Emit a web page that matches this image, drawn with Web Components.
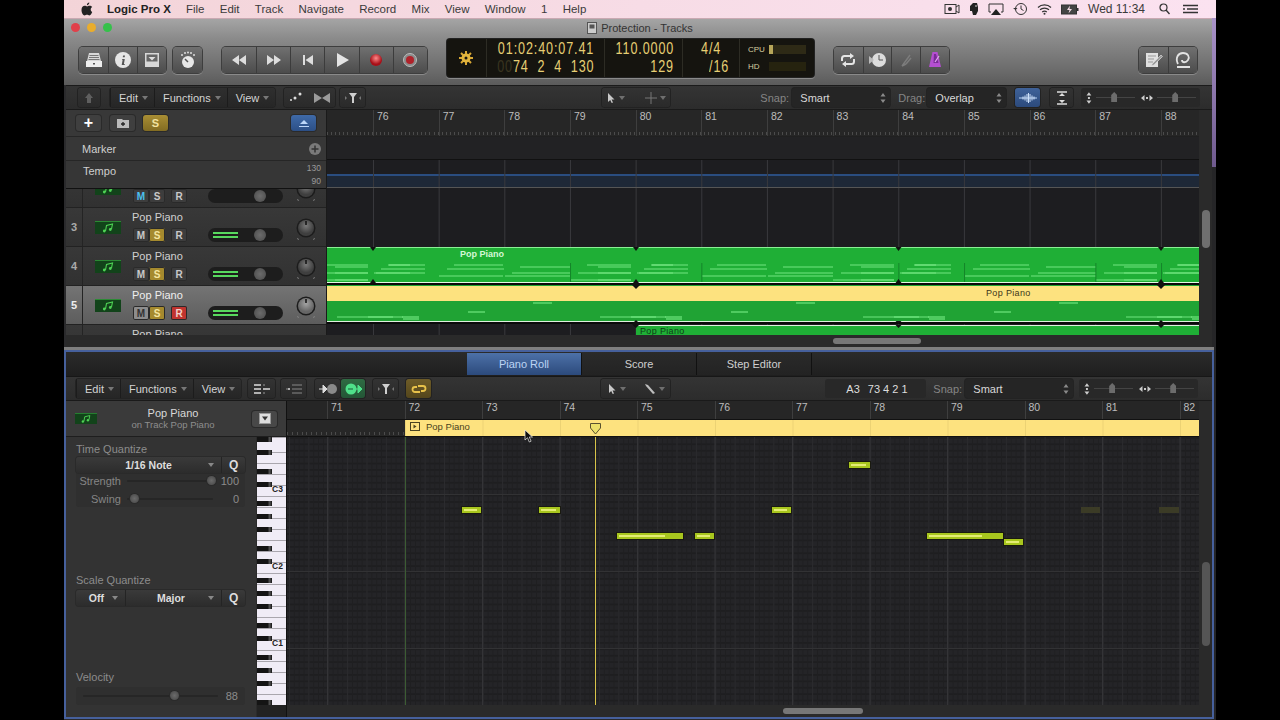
<!DOCTYPE html>
<html>
<head>
<meta charset="utf-8">
<title>Logic Pro X</title>
<style>
html,body{margin:0;padding:0;background:#000;width:1280px;height:720px;overflow:hidden;font-family:"Liberation Sans",Arial,sans-serif;}
</style>
</head>
<body>
<logic-app>
    <mac-menubar></mac-menubar>
    <window-toolbar></window-toolbar>
    <arrange-panel></arrange-panel>
    <piano-panel></piano-panel>
</logic-app>
<script>
// icons used by more than one component
const svg = (w, h, body) => `<svg width="${w}" height="${h}" viewBox="0 0 ${w} ${h}" style="display:block">${body}</svg>`;
const TRI = svg(6, 4, '<path d="M0 0h6L3 4z" fill="#6f6f6f"/>');
const ICON = {
    apple: svg(12, 14, '<path fill="#222" d="M8.3 0.6c.1 1.3-1 2.6-2.4 2.6C5.800 1.900 7 .7 8.300 .6zM11.200 10c-.5 1.200-1.500 3.400-2.800 3.400-1 0-1.300-.6-2.400-.6s-1.500.6-2.400.6C2.100 13.400.5 10.500.5 7.900.5 5.300 2.100 3.800 3.700 3.800c1 0 1.800.6 2.400.6s1.300-.7 2.600-.7c.9 0 1.900.5 2.500 1.300-2.100 1.200-1.800 4.100 0 5z"/>'),
    note: svg(26, 13, '<rect width="26" height="13" fill="#12431a"/><rect width="26" height="1" fill="#2b8a34"/><path d="M10.500 10L11.500 4.500l6-1.500-1 5" stroke="#4fd455" stroke-width="1.100" fill="none"/><circle cx="9.300" cy="10" r="1.400" fill="#4fd455"/><circle cx="15.300" cy="8.500" r="1.400" fill="#4fd455"/>'),
    pointer: svg(10, 12, '<path d="M2 1v9l2.200-2 1.500 3 1.300-.6-1.400-2.900H8.500z" fill="#c9c9c9"/>'),
    filter: svg(20, 12, '<path d="M6 1h8l-3 4v6H9V5z" fill="#cfcfcf"/><path d="M2 4l2 2-2 2zM18 4l-2 2 2 2z" fill="#777"/>'),
    updown: svg(6, 12, '<path d="M3 1l2.500 3.500h-5zM3 11L.5 7.500h5z" fill="#8a8a8a"/>')
};

class LogicApp extends HTMLElement {
    connectedCallback() {
        this.attachShadow({mode: 'open'}).innerHTML = `
            <style>
                :host {
                    display:flex;
                    flex-direction:column;
                    width:1152px;
                    height:720px;
                    margin-left:64px;
                    background:linear-gradient(90deg,#2a2a2c 0,#2a2a2c 1148px,#252527 1148px);
                    position:relative;
                }
                .strip {
                    position:absolute;
                    right:0;
                    top:18px;
                    width:4px;
                    height:149px;
                    background:linear-gradient(#a993c9,#6f5a8e);
                }
            </style>
            <slot></slot>
            <div class="strip"></div>
        `;
    }
}
customElements.define('logic-app', LogicApp);

class MacMenubar extends HTMLElement {
    connectedCallback() {
        const items = ['File','Edit','Track','Navigate','Record','Mix','View','Window','1','Help'];
        const status = [
            svg(16,12,'<rect x="1" y="1.500" width="11" height="9" fill="none" stroke="#333"/><circle cx="6" cy="6" r="2" fill="#333"/><path d="M12 4l3-2v8l-3-2" fill="none" stroke="#333"/>'),
            svg(10,14,'<path d="M1 4l3-3h4l1 4v4l-2 4H4L3 9H1z" fill="#222"/><circle cx="7" cy="4" r=".8" fill="#eee"/>'),
            svg(16,13,'<path d="M3 9H1V1h14v8h-2" fill="none" stroke="#333"/><path d="M8 6l5 6H3z" fill="#222"/>'),
            svg(15,14,'<circle cx="8" cy="7" r="5.500" fill="none" stroke="#333"/><path d="M8 3.500V7l2.500 1.500" fill="none" stroke="#333"/><path d="M0 6l2.500 2L4.500 6z" fill="#333"/>'),
            svg(15,12,'<path d="M1 4.500c3.500-3.500 9.500-3.500 13 0M3 6.800c2.500-2.300 6.500-2.300 9 0M5.200 9c1.300-1 3.300-1 4.600 0" fill="none" stroke="#333" stroke-width="1.200"/><circle cx="7.500" cy="10.800" r="1" fill="#333"/>'),
            svg(18,11,'<rect x=".5" y="1" width="15" height="9" fill="#444" stroke="#333"/><rect x="16" y="4" width="1.500" height="3" fill="#333"/><path d="M9 1.500L6 6h2.500L7.500 9.500 11 5H8.500z" fill="#f4dde6"/>')
        ];
        this.attachShadow({mode: 'open'}).innerHTML = `
            <style>
                :host {
                    display:flex;
                    align-items:center;
                    flex:none;
                    height:18px;
                    padding:0 0 0 17px;
                    background:linear-gradient(90deg,#f3d4d8,#f7dce6 50%,#fbe2f0);
                    font:11.5px "Liberation Sans",Arial,sans-serif;
                    color:#3a3a3a;
                    box-shadow:0 1px 0 #c9a9b2;
                    position:relative;
                }
                b { margin:0 15px 0 14px; color:#222; font-size:11.5px; }
                span { margin-right:15.3px; }
                .right { margin-left:auto; display:flex; align-items:center; padding-right:18px; }
                .right i { display:block; margin-right:9px; }
                .right em { font-style:normal; margin:0 14px 0 0; font-size:12px; }
            </style>
            ${ICON.apple}
            <b>Logic Pro X</b>
            ${items.map(i => `<span>${i}</span>`).join('')}
            <div class="right">
                ${status.map(s => `<i>${s}</i>`).join('')}
                <em>Wed 11:34</em>
                <i style="margin-right:13px">${svg(11,12,'<circle cx="4.500" cy="4.500" r="3.500" fill="none" stroke="#333" stroke-width="1.200"/><path d="M7 7l3.500 4" stroke="#333" stroke-width="1.300"/>')}</i>
                <i style="margin:0">${svg(15,10,'<path d="M0 1.500h15M4 5h11M0 8.500h15" stroke="#333" stroke-width="1.500"/><path d="M0 5h2" stroke="#333" stroke-width="1.500"/>')}</i>
            </div>
        `;
    }
}
customElements.define('mac-menubar', MacMenubar);

class ToolBtn extends HTMLElement {
    connectedCallback() {
        const w = this.getAttribute('w') || 29;
        this.attachShadow({mode: 'open'}).innerHTML = `
            <style>
                :host {
                    display:flex;
                    align-items:center;
                    justify-content:center;
                    width:${w}px;
                    height:26px;
                    background:linear-gradient(#707070,#4c4c4c);
                    border-left:1px solid #3c3c3c;
                    box-sizing:border-box;
                }
                :host(:first-child) { border-left:none; }
            </style>
            <slot></slot>
        `;
    }
}
customElements.define('tool-btn', ToolBtn);

class BtnGroup extends HTMLElement {
    connectedCallback() {
        this.attachShadow({mode: 'open'}).innerHTML = `
            <style>
                :host {
                    display:flex;
                    flex:none;
                    border-radius:4px;
                    overflow:hidden;
                    margin-top:3px;
                    box-shadow:0 0 0 1px #3e3e3e,0 1px 0 1px #8a8a8a;
                }
            </style>
            <slot></slot>
        `;
    }
}
customElements.define('btn-group', BtnGroup);

class LcdDisplay extends HTMLElement {
    connectedCallback() {
        this.attachShadow({mode: 'open'}).innerHTML = `
            <style>
                :host {
                    display:flex;
                    flex:none;
                    width:367px;
                    height:38px;
                    margin-left:20px;
                    background:#15140f;
                    border-radius:3px;
                    box-shadow:0 0 0 1px #222,0 1px 0 1px #8a8a8a;
                    color:#e7cf74;
                    font:17px "Liberation Sans",sans-serif;
                    overflow:hidden;
                }
                .cell {
                    display:flex;
                    flex-direction:column;
                    justify-content:center;
                    align-items:flex-end;
                    flex:none;
                    border-right:1px solid #2d2c24;
                    line-height:18px;
                    box-sizing:border-box;
                    padding-right:10px;
                    white-space:nowrap;
                }
                .cell div { transform:scaleX(.74); transform-origin:100% 50%; letter-spacing:1.2px; }
                .dim { color:#3a3520; }
                .meters { flex:1; padding:3px 8px 3px 8px; display:flex; flex-direction:column; justify-content:space-between; font:8px "Liberation Sans",sans-serif; color:#d8cfa0; }
                .meter { display:flex; align-items:center; height:15px; }
                .meter span { width:21px; }
                .meter i { display:block; flex:1; height:9px; background:linear-gradient(90deg,#b7a65a 4px,#2e2a16 4px); }
                .meter.hd i { background:#26230f; }
            </style>
            <div class="cell" style="width:40px;align-items:center;padding:0">
                ${svg(16,16,'<g stroke="#d9a834" stroke-width="2"><path d="M8 1v14M1 8h14M3 3l10 10M13 3L3 13"/></g><circle cx="8" cy="8" r="4.500" fill="#e2b53e"/><circle cx="8" cy="8" r="1.500" fill="#15140f"/>')}
            </div>
            <div class="cell" style="width:118px">
                <div>01:02:40:07.41</div>
                <div><span class="dim">00</span>74&nbsp; 2&nbsp; 4&nbsp; 130</div>
            </div>
            <div class="cell" style="width:78px;padding-right:8px">
                <div>110.0000</div>
                <div>129</div>
            </div>
            <div class="cell" style="width:57px">
                <div style="margin-right:8px">4/4</div>
                <div>/16</div>
            </div>
            <div class="meters">
                <div class="meter"><span>CPU</span><i></i></div>
                <div class="meter hd"><span>HD</span><i></i></div>
            </div>
        `;
    }
}
customElements.define('lcd-display', LcdDisplay);

class WindowToolbar extends HTMLElement {
    connectedCallback() {
        this.attachShadow({mode: 'open'}).innerHTML = `
            <style>
                :host {
                    display:block;
                    flex:none;
                    height:67px;
                    background:linear-gradient(#a6a6a6,#8b8b8b 30%,#6a6a6a 80%,#5b5b5b);
                    font:11px "Liberation Sans",Arial,sans-serif;
                }
                .title { position:relative; height:19px; display:flex; align-items:center; justify-content:center; color:#333; gap:4px; padding-right:0; }
                .lights { position:absolute; left:7px; top:5px; display:flex; gap:7px; }
                .lights i { display:block; width:9px; height:9px; border-radius:50%; }
                .row { display:flex; align-items:center; height:42px; padding-left:15px; }
                .m6 { margin-left:7px; }
                .m19 { margin-left:20px; }
                .m20 { margin-left:20px; }
                .end { margin-left:auto; margin-right:19px; }
            </style>
            <div class="title">
                <div class="lights"><i style="background:#e0404a"></i><i style="background:#e9ad2d"></i><i style="background:#35c24a"></i></div>
                ${svg(10,12,'<rect x=".5" y=".5" width="9" height="11" fill="#ccc" stroke="#555"/><rect x="2.500" y="2.500" width="5" height="4" fill="#555"/>')}
                <span>Protection - Tracks</span>
            </div>
            <div class="row">
                <btn-group>
                    <tool-btn>${svg(18,16,'<path d="M4 1h10l2 8H2z" fill="#d8d8d8"/><path d="M4.500 3.500h9M4 5.500h10M3.500 7.500h11" stroke="#777"/><rect x="1" y="9" width="16" height="6" fill="#eee"/><rect x="8" y="11" width="2" height="1.500" fill="#555"/>')}</tool-btn>
                    <tool-btn>${svg(16,16,'<circle cx="8" cy="8" r="8" fill="#e6e6e6"/><path d="M8 3.500h2L9.700 5.300H7.800zM7.500 7h2.300L8.900 12h1l-.3 1H6.700l.9-5H6.800z" fill="#555"/>')}</tool-btn>
                    <tool-btn>${svg(16,16,'<rect x="1" y="1" width="14" height="14" fill="#d8d8d8"/><rect x="2.500" y="2.500" width="11" height="7" fill="#666"/><path d="M4.500 5h7L8 8.500z" fill="#ddd"/>')}</tool-btn>
                </btn-group>
                <btn-group class="m6"><tool-btn>${svg(16,18,'<circle cx="8" cy="11" r="6" fill="#e8e8e8"/><path d="M8 11l-3-3" stroke="#555" stroke-width="1.500"/><circle cx="2" cy="4" r="1" fill="#ddd"/><circle cx="5" cy="2" r="1" fill="#ddd"/><circle cx="8" cy="1.500" r="1" fill="#ddd"/><circle cx="11" cy="2" r="1" fill="#ddd"/><circle cx="14" cy="4" r="1" fill="#ddd"/>')}</tool-btn></btn-group>
                <btn-group class="m19">
                    <tool-btn w="34.170">${svg(16,12,'<path d="M8 1v10L1 6zM15 1v10L8 6z" fill="#ddd"/>')}</tool-btn>
                    <tool-btn w="34.170">${svg(16,12,'<path d="M1 1v10l7-5zM8 1v10l7-5z" fill="#ddd"/>')}</tool-btn>
                    <tool-btn w="34.170">${svg(12,12,'<path d="M1 1h2v10H1zM11 1v10L3.500 6z" fill="#ddd"/>')}</tool-btn>
                    <tool-btn w="34.170">${svg(13,14,'<path d="M1 0v14l12-7z" fill="#e4e4e4"/>')}</tool-btn>
                    <tool-btn w="34.170">${svg(14,14,'<defs><radialGradient id="rec" cx=".5" cy=".35"><stop offset="0" stop-color="#ff8a8a"/><stop offset="1" stop-color="#a80f18"/></radialGradient></defs><circle cx="7" cy="7" r="6" fill="url(#rec)"/>')}</tool-btn>
                    <tool-btn w="34.170">${svg(14,14,'<circle cx="7" cy="7" r="6.500" fill="#8a8a8a" stroke="#bbb"/><circle cx="7" cy="7" r="4" fill="#b0222a"/>')}</tool-btn>
                </btn-group>
                <lcd-display></lcd-display>
                <btn-group class="m20">
                    <tool-btn w="28.750">${svg(18,16,'<path d="M3 9V6.500C3 5 4 4 5.500 4H12M15 7v2.500c0 1.500-1 2.500-2.500 2.500H6" fill="none" stroke="#e4e4e4" stroke-width="2"/><path d="M11 1l4 3-4 3zM7 9l-4 3 4 3z" fill="#e4e4e4"/>')}</tool-btn>
                    <tool-btn w="28.750">${svg(18,16,'<circle cx="10" cy="8" r="7" fill="#dcdcdc"/><path d="M10 3v5h4" stroke="#555" fill="none"/><path d="M0 4l5 4-5 4z" fill="#bbb"/>')}</tool-btn>
                    <tool-btn w="28.750">${svg(14,16,'<path d="M3 14L11 3M7 12l5-6M3 14l4-2" stroke="#7c7c7c" stroke-width="1.500" fill="none"/>')}</tool-btn>
                    <tool-btn w="28.750">${svg(14,17,'<path d="M4.500 1h5L13 16H1z" fill="#b44fd0"/><path d="M6 3h2l2.500 9h-5z" fill="#7a2b96"/><path d="M7 11l4-6" stroke="#e3a8f0" stroke-width="1.200"/>')}</tool-btn>
                </btn-group>
                <btn-group class="end">
                    <tool-btn>${svg(18,16,'<path d="M1 1h12v14H1z" fill="#e0e0e0"/><path d="M3 4h8M3 7h6M3 10h5" stroke="#999"/><path d="M7 12L16 3l1.500 1.500L9 13l-2.500 1z" fill="#9c9c9c" stroke="#e8e8e8" stroke-width=".6"/>')}</tool-btn>
                    <tool-btn>${svg(18,18,'<path d="M4 13C1 7 4 2 9 2s7 4 5 7-6 3-6 0M3 16h13" fill="none" stroke="#e2e2e2" stroke-width="1.800"/>')}</tool-btn>
                </btn-group>
            </div>
        `;
    }
}
customElements.define('window-toolbar', WindowToolbar);

// Edit / Functions / View style pill
class MenuPills extends HTMLElement {
    connectedCallback() {
        const items = this.getAttribute('items').split(',');
        this.attachShadow({mode: 'open'}).innerHTML = `
            <style>
                :host {
                    display:flex;
                    flex:none;
                    height:19px;
                    border-radius:3px;
                    background:linear-gradient(#2f2f2f,#262626);
                    box-shadow:0 0 0 1px #232323;
                    color:#d4d4d4;
                    font:11px "Liberation Sans",Arial,sans-serif;
                }
                div { display:flex; align-items:center; padding:0 6px 0 8px; border-left:1px solid #1c1c1c; white-space:nowrap; }
                div:first-child { border:none; }
                i { display:block; margin-left:4px; border:3px solid transparent; border-top:4px solid #777; border-bottom:0; }
            </style>
            ${items.map(i => `<div>${i}<i></i></div>`).join('')}
        `;
    }
}
customElements.define('menu-pills', MenuPills);

class IconBtn extends HTMLElement {
    connectedCallback() {
        const w = this.getAttribute('w') || 25;
        const bg = this.getAttribute('bg') || 'linear-gradient(#333,#2a2a2a)';
        this.attachShadow({mode: 'open'}).innerHTML = `
            <style>
                :host {
                    display:flex;
                    flex:none;
                    align-items:center;
                    justify-content:center;
                    gap:3px;
                    width:${w}px;
                    height:19px;
                    background:${bg};
                    border-radius:3px;
                    box-shadow:0 0 0 1px #222;
                }
            </style>
            <slot></slot>
        `;
    }
}
customElements.define('icon-btn', IconBtn);

class SelectBox extends HTMLElement {
    connectedCallback() {
        const w = this.getAttribute('w');
        this.attachShadow({mode: 'open'}).innerHTML = `
            <style>
                :host {
                    display:flex;
                    flex:none;
                    align-items:center;
                    justify-content:space-between;
                    box-sizing:border-box;
                    width:${w}px;
                    height:19px;
                    padding:0 4px 0 8px;
                    background:#252525;
                    border-radius:3px;
                    box-shadow:0 0 0 1px #232323;
                    color:#d8d8d8;
                    font:11px "Liberation Sans",Arial,sans-serif;
                }
            </style>
            <span><slot></slot></span>
            ${ICON.updown}
        `;
    }
}
customElements.define('select-box', SelectBox);

class ZoomSliders extends HTMLElement {
    connectedCallback() {
        const track = `<i style="display:block;position:relative;width:40px;height:1px;background:#444"><b style="position:absolute;left:15px;top:-5px;width:6px;height:10px;background:#6c6c6c;clip-path:polygon(50% 0,100% 30%,100% 100%,0 100%,0 30%)"></b></i>`;
        this.attachShadow({mode: 'open'}).innerHTML = `
            <style>
                :host {
                    display:flex;
                    flex:none;
                    align-items:center;
                    gap:4px;
                    box-sizing:border-box;
                    width:119px;
                    height:19px;
                    padding:0 4px 0 5px;
                    background:#282828;
                    border-radius:3px;
                }
            </style>
            ${svg(6,12,'<path d="M3 0l2.500 3.500h-5zM3 12L.5 8.500h5zM2 5h2v2H2z" fill="#ccc"/>')}
            ${track}
            <span style="margin-left:2px">${svg(12,6,'<path d="M0 3l3.500-3v6zM12 3L8.500 0v6zM5 2h2v2H5z" fill="#ccc"/>')}</span>
            ${track}
        `;
    }
}
customElements.define('zoom-sliders', ZoomSliders);

// bar number ruler, one cell per bar
class BarRuler extends HTMLElement {
    connectedCallback() {
        const start = +this.getAttribute('start');
        const count = +this.getAttribute('count');
        const bar = +this.getAttribute('bar');
        const lead = +this.getAttribute('lead');
        let cells = '';
        for (let i = 0; i < count; i++) cells += `<div class="c" style="width:${bar}px">${start + i}</div>`;
        this.attachShadow({mode: 'open'}).innerHTML = `
            <style>
                :host {
                    display:flex;
                    flex:none;
                    overflow:hidden;
                    height:100%;
                    color:#bdbdbd;
                    font:10.5px "Liberation Sans",Arial,sans-serif;
                    white-space:nowrap;
                }
                .c { flex:none; box-sizing:border-box; border-left:1px solid #3e3e3e; padding:0 0 0 3px; line-height:12px; }
            </style>
            <div style="flex:none;width:${lead}px"></div>
            ${cells}
        `;
    }
}
customElements.define('bar-ruler', BarRuler);

class TrackRow extends HTMLElement {
    connectedCallback() {
        const num = this.getAttribute('num') || '';
        const sel = this.hasAttribute('selected');
        const soloOn = !this.hasAttribute('nosolo');
        const muteBlue = this.hasAttribute('blue');
        const cut = this.getAttribute('cut');   // rows whose top or bottom is scrolled out of view
        const knobFill = sel ? 'url(#kl)' : 'url(#kd)';
        this.attachShadow({mode: 'open'}).innerHTML = `
            <style>
                :host {
                    display:block;
                    flex:none;
                    height:39px;
                    box-sizing:border-box;
                    border-bottom:1px solid #222;
                    background:${sel ? 'linear-gradient(#747474,#5d5d5d)' : 'linear-gradient(#383838,#313131)'};
                    color:${sel ? '#eee' : '#d0d0d0'};
                    font:11px "Liberation Sans",Arial,sans-serif;
                }
                .in { display:flex; height:100%; }
                .num { width:16px; flex:none; border-right:1px solid #242424; display:flex; align-items:center; justify-content:center; font-size:11px; font-weight:bold; color:${sel ? '#eee' : '#aaa'}; }
                .ic { width:50px; flex:none; display:flex; align-items:center; justify-content:center; }
                .mid { width:75px; flex:none; padding-top:3px; }
                .mid .name { line-height:13px; height:17px; margin-left:-1px; }
                .btns { display:flex; }
                .btns b { display:flex; align-items:center; justify-content:center; width:16px; height:14px; font-size:10px; background:${sel ? '#8d8d8d' : '#3d3d3d'}; color:${sel ? '#333' : '#c9c9c9'}; box-shadow:inset 0 0 0 1px #2a2a2a; border-radius:2px; }
                .btns b.s { background:#a58a2e; color:#f5e6a0; }
                .btns b.m { color:#4bc0f0; }
                .btns b.r { margin-left:6px; }
                .btns b.on { background:#c0342f; color:#f4d0c8; }
                .sl { position:relative; flex:none; width:75px; height:14px; margin:20px 0 0 0; background:#1d1d1d; border-radius:7px; }
                .sl i { position:absolute; left:5px; height:2px; width:25px; background:#58d85e; }
                .sl b { position:absolute; left:46px; top:1px; width:12px; height:12px; border-radius:50%; background:radial-gradient(#6c6c6c,#4a4a4a); }
                .knob { margin:9px 0 0 12px; }
            </style>
            <div class="in">
                <div class="num">${num}</div>
                <div class="ic">${cut === 'bottom' ? '' : ICON.note}</div>
                <div class="mid">
                    <div class="name">${cut === 'top' ? '' : 'Pop Piano'}</div>
                    ${cut === 'bottom' ? '' : `<div class="btns">
                        <b class="${muteBlue ? 'm' : ''}">M</b><b class="${soloOn ? 's' : ''}">S</b><b class="r ${sel ? 'on' : ''}">R</b>
                    </div>`}
                </div>
                ${cut === 'bottom' ? '' : `<div class="sl">
                    ${soloOn ? '<i style="top:4px"></i><i style="top:8px"></i>' : ''}
                    <b></b>
                </div>
                <div class="knob">${svg(22,24,`<defs><radialGradient id="kd" cx=".5" cy=".35"><stop offset="0" stop-color="#7a7a7a"/><stop offset="1" stop-color="#3f3f3f"/></radialGradient><radialGradient id="kl" cx=".5" cy=".35"><stop offset="0" stop-color="#a4a4a4"/><stop offset="1" stop-color="#666"/></radialGradient></defs><circle cx="11" cy="11" r="9.500" fill="#1c1c1c"/><circle cx="11" cy="11" r="8" fill="${knobFill}"/><path d="M11 4v4" stroke="#111" stroke-width="1.500"/><path d="M2.500 21l1 2M19.500 21l-1 2" stroke="#8a8a8a" stroke-width=".8"/>`)}</div>`}
            </div>
        `;
    }
}
customElements.define('track-row', TrackRow);

// a lane with a green region; note lines repeat in a 4 bar pattern
class RegionLane extends HTMLElement {
    connectedCallback() {
        const kind = this.getAttribute('kind');
        const W = 872, P = 263, X0 = 46, BAR = 65.67;
        const line = (x1, x2, y, c) => `<path d="M${x1} ${y}H${x2}" stroke="${c}" stroke-width="1.200"/>`;
        let body = '';
        const marks = [46, 309, 571.500, 834];
        if (kind === 'a') {
            body += `<rect x="0" y="1" width="${W}" height="37" fill="#1faf36"/><rect x="0" y="1" width="${W}" height="1" fill="#8af094"/><rect y="36" width="${W}" height="1" fill="#e7f7e7"/><rect y="37" width="${W}" height="2" fill="#0a0a0a"/>`;
            const pat = [[19,15,52],[19,81,130],[19,214,258],[19,279,300],[21,-38,-5],[21,147,197],[23,8,52],[23,74,131],[27,-38,-5],[27,1,52],[27,139,197],[27,205,258],[27,266,300],[30,66,130],[30,132,197],[34,-38,-5],[34,197,258]];
            for (let k = -1; k < 4; k++) {
                const o = X0 + P * k;
                pat.forEach(p => body += line(o + p[1], o + p[2], p[0], '#72e580'));
            }
            [3,5,8,9,11,12].forEach(i => body += `<rect x="${X0 + i * BAR}" y="17" width="1" height="19" fill="#15852a"/>`);
            marks.forEach(m => body += `<path d="M${m - 3} 1l3 4 3-4z" fill="#111"/><path d="M${m - 3} 37l3-4 3 4z" fill="#111"/>`);
        }
        if (kind === 'b') {
            body += `<rect x="0" y="0" width="${W}" height="37" fill="#20a334"/><rect y="1" width="${W}" height="15" fill="#fde27f"/><rect y="36" width="${W}" height="1" fill="#dff0df"/><rect y="37" width="${W}" height="2" fill="#0a0a0a"/>`;
            const pat = [[18,160,179],[27,95,112],[32,-5,20],[32,29,46],[32,227,293],[34,293,309]];
            for (let k = -1; k < 4; k++) {
                const o = X0 + P * k;
                pat.forEach(p => body += line(o + p[1], o + p[2], p[0], '#6fe67e'));
            }
            [309, 834].forEach(m => body += `<path d="M${m} -4l4 4-4 4-4-4z" fill="#111"/><path d="M${m} 35l4 4-4 4-4-4z" fill="#111"/>`);
            [571.500].forEach(m => body += `<path d="M${m - 3} 36l3 3 3-3z" fill="#111"/>`);
        }
        if (kind === 'c') {
            body += `<rect x="309" y="1" width="${W}" height="11" fill="#1faf36"/><rect x="309" y="1" width="${W}" height="1" fill="#dff0df"/>`;
            marks.slice(1).forEach(m => body += `<path d="M${m - 3} 1l3 3 3-3z" fill="#111"/>`);
        }
        this.attachShadow({mode: 'open'}).innerHTML = `
            <style>
                :host { display:block; flex:none; position:relative; height:${kind === 'c' ? 11 : 39}px; overflow:visible; }
                svg { position:absolute; left:0; top:0; overflow:visible; }
                span { position:absolute; font:9px "Liberation Sans",Arial,sans-serif; white-space:nowrap; letter-spacing:.35px; }
            </style>
            <svg width="${W}" height="39" viewBox="0 0 ${W} 39">${body}</svg>
            <slot></slot>
            ${kind === 'a' ? '<span style="left:133px;top:3px;color:#d4f7d6;font-weight:bold;letter-spacing:0">Pop Piano</span>' : ''}
            ${kind === 'b' ? '<span style="left:659px;top:3px;color:#3d3618">Pop Piano</span>' : ''}
            ${kind === 'c' ? '<span style="left:313px;top:2px;color:#0f3d16">Pop Piano</span>' : ''}
        `;
    }
}
customElements.define('region-lane', RegionLane);

class ArrangePanel extends HTMLElement {
    connectedCallback() {
        this.attachShadow({mode: 'open'}).innerHTML = `
            <style>
                :host {
                    display:block;
                    flex:none;
                    width:1146px;
                    height:262px;
                    margin-left:2px;
                    background:#2a2a2a;
                    font:11px "Liberation Sans",Arial,sans-serif;
                    color:#ccc;
                    box-sizing:border-box;
                }
                .bar { display:flex; align-items:center; height:25px; box-sizing:border-box; padding:0 0 0 12px; background:linear-gradient(#343434,#2c2c2c); border-top:1px solid #1b1b1b; border-bottom:1px solid #1a1a1a; }
                .lbl { color:#858585; font-size:11px; }
                .body { display:grid; grid-template-columns:261px 872px 13px; height:225px; }
                .left { display:flex; flex-direction:column; border-right:1px solid #1a1a1a; box-sizing:border-box; overflow:hidden; }
                .head { flex:none; height:27px; display:flex; align-items:center; padding:0 0 0 10px; gap:8px; background:#383838; border-bottom:1px solid #262626; box-sizing:border-box; }
                .sq { display:flex; align-items:center; justify-content:center; width:25px; height:16px; border-radius:3px; background:#3f3f3f; box-shadow:0 0 0 1px #2a2a2a; box-sizing:border-box; }
                .global { flex:none; height:23px; display:flex; align-items:center; justify-content:space-between; padding:0 5px 0 16px; background:#373737; border-bottom:1px solid #262626; font-size:11px; color:#cfcfcf; }
                .tempo { height:28px; position:relative; background:#363636; border-bottom:1px solid #111; padding:0 5px 0 17px; display:flex; justify-content:space-between; box-sizing:border-box; flex:none; }
                .tempo > span { line-height:13px; padding-top:4px; }
                .tempo small { display:flex; flex-direction:column; gap:3px; padding-top:2px; text-align:right; font-size:8.500px; color:#9a9a9a; line-height:10px; }
                .tracks { flex:1; overflow:hidden; display:flex; flex-direction:column; background:#2c2c2c; }
                .tracks track-row:first-child { margin-top:-20px; }
                .right { position:relative; display:flex; flex-direction:column; overflow:hidden; background:#1d1d20; }
                .rul { flex:none; height:27px; background:#262626; position:relative; border-bottom:1px solid #202020; box-sizing:border-box; }
                .rul:after { content:""; position:absolute; left:0; right:0; bottom:1px; height:3px; background:repeating-linear-gradient(90deg,#4b4b4b 0,#4b4b4b 1px,transparent 1px,transparent 4.100px); }
                .mark { flex:none; height:23px; background:#222224; border-bottom:1px solid #111; box-sizing:border-box; }
                .tmp { flex:none; height:28px; box-sizing:border-box; border-bottom:1px solid #555;
                       background-image:linear-gradient(90deg,#38383c 1px,transparent 1px),linear-gradient(#1d1d20 0,#1d1d20 14px,#2a4d80 14px,#2a4d80 15.500px,#1e2837 15.500px);
                       background-size:65.67px 100%,100% 100%; background-position:46px 0,0 0; }
                .lanes { flex:1; display:flex; flex-direction:column; overflow:hidden; background-image:linear-gradient(90deg,#38383c 1px,transparent 1px); background-size:65.67px 100%; background-position:46px 0; }
                .scr { background:#2a2a2a; padding:100px 0 0 3px; box-sizing:border-box; }
                .scr i { display:block; width:8px; height:38px; background:#6f6f6f; border-radius:4px; }
                .foot { height:12px; background:#2a2a2a; padding:3px 0 0 767px; box-sizing:border-box; }
                .foot i { display:block; width:88px; height:6px; border-radius:3px; background:#777; }
            </style>
            <div class="bar">
                <icon-btn w="22" style="margin-right:10px">${svg(10,12,'<path d="M5 1l4 5H7v5H3V6H1z" fill="#5f5f5f"/>')}</icon-btn>
                <menu-pills items="Edit,Functions,View"></menu-pills>
                <icon-btn w="51" style="margin-left:9px"><span style="display:flex;gap:10px">${svg(14,10,'<circle cx="2" cy="8" r="1" fill="#ddd"/><circle cx="6" cy="6" r="1.500" fill="#ddd"/><circle cx="11" cy="2" r="1.500" fill="#ddd"/>')}${svg(18,12,'<path d="M1 1l8 5 8-5v10L9 6l-8 5z" fill="#9a9a9a"/>')}</span></icon-btn>
                <icon-btn w="25" style="margin-left:5px">${ICON.filter}</icon-btn>
                <icon-btn w="68" style="margin-left:237px">${ICON.pointer}${TRI}<span style="width:14px"></span>${svg(12,12,'<path d="M6 0v12M0 6h12" stroke="#777"/>')}${TRI}</icon-btn>
                <span class="lbl" style="margin-left:90px;width:32px">Snap:</span>
                <select-box w="98">Smart</select-box>
                <span class="lbl" style="margin-left:8px;width:29px">Drag:</span>
                <select-box w="79">Overlap</select-box>
                <icon-btn w="25" style="margin-left:9px" bg="linear-gradient(#3f6299,#2c4a7c)">${svg(20,10,'<path d="M1 5h18" stroke="#bcd6f8"/><path d="M5 3.500v3M7 2.500v5M9 1v8M10.500 0v10M12 1v8M14 2.500v5M16 3.500v3" stroke="#cfe2fb"/>')}</icon-btn>
                <icon-btn w="23" style="margin-left:10px">${svg(12,14,'<path d="M1 1h10M1 13h10" stroke="#ddd" stroke-width="1.300"/><path d="M6 2l3 3H3zM6 12L3 9h6z" fill="#ddd"/>')}</icon-btn>
                <zoom-sliders style="margin-left:8px"></zoom-sliders>
            </div>
            <div class="body">
                <div class="left">
                    <div class="head">
                        <span class="sq" style="margin-right:1px"><span style="color:#fff;font:bold 16px 'Liberation Sans';line-height:14px">+</span></span>
                        <span class="sq">${svg(14,12,'<path d="M1 2h5l1 1h6v8H1z" fill="#bbb"/><path d="M7 5v4M5 7h4" stroke="#222" stroke-width="1.300"/>')}</span>
                        <span class="sq" style="background:linear-gradient(#a98e34,#826c22);color:#f2e2a0;font-weight:bold">S</span>
                        <span class="sq" style="margin-left:115px;background:linear-gradient(#3f6aa8,#2c4f86)">${svg(12,9,'<path d="M6 1l4 4H2z" fill="#bcd6f8"/><path d="M1 7.500h10" stroke="#bcd6f8"/>')}</span>
                    </div>
                    <div class="global">
                        <span>Marker</span>
                        ${svg(12,12,'<circle cx="6" cy="6" r="6" fill="#7a7a7a"/><path d="M6 2.500v7M2.500 6h7" stroke="#333" stroke-width="1.500"/>')}
                    </div>
                    <div class="tempo"><span style="color:#cfcfcf">Tempo</span><small><span>130</span><span>90</span></small></div>
                    <div class="tracks">
                        <track-row blue nosolo cut="top"></track-row>
                        <track-row num="3"></track-row>
                        <track-row num="4"></track-row>
                        <track-row num="5" selected></track-row>
                        <track-row cut="bottom"></track-row>
                    </div>
                </div>
                <div class="right">
                    <div class="rul"><bar-ruler start="76" count="13" bar="65.67" lead="46"></bar-ruler></div>
                    <div class="mark"></div>
                    <div class="tmp"></div>
                    <div class="lanes">
                        <div style="flex:none;height:58px"></div>
                        <region-lane kind="a"></region-lane>
                        <region-lane kind="b"></region-lane>
                        <region-lane kind="c"></region-lane>
                    </div>
                </div>
                <div class="scr"><i></i></div>
            </div>
            <div class="foot"><i></i></div>
        `;
    }
}
customElements.define('arrange-panel', ArrangePanel);

class PianoKeys extends HTMLElement {
    connectedCallback() {
        // tops of the black keys, repeating every octave (77px)
        const tops = [0, 13, 32, 45, 58];
        let keys = '';
        for (let o = -1; o < 4; o++) {
            tops.forEach(t => {
                const y = t + o * 77 + 32;
                if (y > -6 && y < 268) keys += `<i style="top:${y}px"></i>`;
            });
        }
        this.attachShadow({mode: 'open'}).innerHTML = `
            <style>
                :host {
                    display:block;
                    position:relative;
                    flex:none;
                    width:30px;
                    height:268px;
                    overflow:hidden;
                    background:#f0ecf6 repeating-linear-gradient(#f0ecf6 0,#f0ecf6 10px,#a9a6ad 10px,#a9a6ad 11px);
                    background-position:0 5px;
                    font:bold 8.500px "Liberation Sans",Arial,sans-serif;
                    color:#222;
                }
                i { position:absolute; left:0; width:15px; height:5px; background:linear-gradient(90deg,#141414 70%,#555 85%,#111); }
                b { position:absolute; left:15px; }
            </style>
            ${keys}
            <b style="top:47px">C3</b>
            <b style="top:124px">C2</b>
            <b style="top:201px">C1</b>
        `;
    }
}
customElements.define('piano-keys', PianoKeys);

class MiniSlider extends HTMLElement {
    connectedCallback() {
        const at = +this.getAttribute('at');
        this.attachShadow({mode: 'open'}).innerHTML = `
            <style>
                :host { display:block; position:relative; flex:1; height:2px; background:#262626; border-radius:1px; }
                i { position:absolute; left:${at}px; top:-4px; width:9px; height:9px; border-radius:50%; background:radial-gradient(#6b6b6b,#454545); box-shadow:0 0 0 1px #2a2a2a; }
            </style>
            <i></i>
        `;
    }
}
customElements.define('mini-slider', MiniSlider);

class QuantizeInspector extends HTMLElement {
    connectedCallback() {
        this.attachShadow({mode: 'open'}).innerHTML = `
            <style>
                :host {
                    display:block;
                    flex:none;
                    width:191px;
                    height:280px;
                    padding:6px 11px 0 10px;
                    box-sizing:border-box;
                    background:#333;
                    border-right:1px solid #2b2b2b;
                    font:11px "Liberation Sans",Arial,sans-serif;
                    color:#888;
                }
                h4 { margin:0; font:11px "Liberation Sans",Arial,sans-serif; line-height:13px; color:#8c8c8c; }
                .box { background:#2f2f2f; border-radius:3px; margin-top:1px; }
                .sel { display:flex; height:16px; background:linear-gradient(#3a3a3a,#2c2c2c); border-radius:3px; box-shadow:0 0 0 1px #2a2a2a; color:#dedede; font-weight:bold; font-size:10.500px; }
                .sel div { display:flex; align-items:center; justify-content:center; border-left:1px solid #242424; position:relative; box-sizing:border-box; }
                .sel div:first-child { border:none; }
                .sel div u { position:absolute; right:7px; top:6px; border:3px solid transparent; border-top:4px solid #888; border-bottom:0; }
                .q { font-weight:bold; font-size:12px; }
                .row { display:flex; align-items:center; height:18px; font-size:11px; color:#858585; }
                .row label { width:45px; text-align:right; margin-right:6px; flex:none; }
                .row span { width:32px; text-align:right; flex:none; padding-right:6px; box-sizing:border-box; color:#8c8c8c; }
            </style>
            <h4>Time Quantize</h4>
            <div class="box" style="height:50px">
                <div class="sel">
                    <div style="width:146px">1/16 Note<u></u></div>
                    <div class="q" style="width:24px">Q</div>
                </div>
                <div class="row" style="margin-top:-1px"><label>Strength</label><mini-slider at="80"></mini-slider><span>100</span></div>
                <div class="row"><label>Swing</label><mini-slider at="3"></mini-slider><span>0</span></div>
            </div>
            <h4 style="margin-top:67px">Scale Quantize</h4>
            <div class="box" style="margin-top:3px">
                <div class="sel">
                    <div style="width:49px;padding-right:8px">Off<u></u></div>
                    <div style="width:97px;padding-right:5px">Major<u></u></div>
                    <div class="q" style="width:24px">Q</div>
                </div>
            </div>
            <h4 style="margin-top:65px">Velocity</h4>
            <div class="box" style="margin-top:3px;height:18px;display:flex;align-items:center;padding:0 7px">
                <mini-slider at="87"></mini-slider>
                <span style="margin-left:8px;color:#8c8c8c">88</span>
            </div>
        `;
    }
}
customElements.define('quantize-inspector', QuantizeInspector);

class NoteGrid extends HTMLElement {
    connectedCallback() {
        // x1, x2, y of each note in screen order
        const notes = [[462,481,507],[539,560,507],[772,791,507],[849,870,462],[617,683,533],[695,714,533],[927,1003,533],[1004,1023,539]];
        const ghosts = [[1081,1100,507],[1159,1179,507]];
        const el = notes.map(n => {
            const w = n[1] - n[0];
            return `<i class="n" style="left:${n[0] - 287}px;top:${n[2] - 437}px;width:${w}px"><u style="width:${Math.round(w * .7)}px"></u></i>`;
        }).join('');
        const gh = ghosts.map(n => `<i class="g" style="left:${n[0] - 287}px;top:${n[2] - 437}px;width:${n[1] - n[0]}px"></i>`).join('');
        this.attachShadow({mode: 'open'}).innerHTML = `
            <style>
                :host {
                    display:block;
                    position:relative;
                    height:268px;
                    background-color:#242427;
                    background-image:
                        linear-gradient(90deg,#343437 1px,transparent 1px),
                        linear-gradient(#323234 1px,transparent 1px),
                        linear-gradient(90deg,#2b2b2e 1px,transparent 1px),
                        linear-gradient(90deg,#1f1f21 1px,transparent 1px),
                        linear-gradient(#1e1e20 2px,transparent 2px);
                    background-size:77.5px 100%,100% 77px,19.375px 100%,4.844px 100%,100% 6.417px;
                    background-position:40px 0,0 57px,2px 0,2px 0,0 0;
                    overflow:hidden;
                }
                .n { position:absolute; height:6px; box-sizing:border-box; background:#a8c61e; box-shadow:0 0 0 1px #1a1a10; display:block; }
                .n u { display:block; height:2px; margin:2px 0 0 2px; background:#e4ec74; }
                .g { position:absolute; height:6px; background:#3b3b26; display:block; }
                .start { position:absolute; left:118px; top:0; bottom:0; width:1px; background:#3c5c33; }
                .play { position:absolute; left:308px; top:0; bottom:0; width:1px; background:#d8c44a; }
            </style>
            <div class="start"></div>
            ${el}${gh}
            <div class="play"></div>
        `;
    }
}
customElements.define('note-grid', NoteGrid);

class PianoPanel extends HTMLElement {
    connectedCallback() {
        this.attachShadow({mode: 'open'}).innerHTML = `
            <style>
                :host {
                    display:block;
                    flex:none;
                    width:1150px;
                    height:369px;
                    margin-top:3px;
                    box-sizing:border-box;
                    border:2px solid #46609c;
                    background:#2a2a2a;
                    font:11px "Liberation Sans",Arial,sans-serif;
                    color:#ccc;
                    box-shadow:0 -3px 0 #7f7f7f;
                }
                .tabs { display:flex; height:25px; padding:1px 0 1px 401px; box-sizing:border-box; background:linear-gradient(#2b2b2b,#1f1f1f); border-bottom:1px solid #171717; }
                .tabs div { display:flex; align-items:center; justify-content:center; width:114px; border-right:1px solid #111; color:#cfcfcf; background:linear-gradient(#2a2a2a,#232323); font-size:11px; }
                .tabs div.on { background:linear-gradient(#4d71a8,#2c4a7c); color:#bcd4f4; }
                .bar { display:flex; align-items:center; height:24px; padding-left:10px; box-sizing:border-box; background:linear-gradient(#343434,#2c2c2c); border-bottom:1px solid #1a1a1a; }
                .lbl { color:#858585; }
                .body { display:grid; grid-template-columns:221px 912px 13px; height:316px; }
                .left { display:flex; flex-direction:column; overflow:hidden; border-right:1px solid #111; box-sizing:border-box; }
                .hd { flex:none; height:36px; position:relative; display:flex; align-items:center; background:#3a3a3a; border-bottom:1px solid #1e1e1e; box-sizing:border-box; padding-left:9px; }
                .hd .t { width:152px; text-align:center; line-height:12px; }
                .hd .t small { display:block; color:#8e8e8e; font-size:9.500px; }
                .hd .b { margin-left:3px; width:25px; height:16px; border-radius:3px; background:#484848; box-shadow:0 0 0 1px #2a2a2a; display:flex; align-items:center; justify-content:center; }
                .ins { display:flex; flex:1; }
                .kb { width:30px; flex:none; background:#222; }
                .center { display:flex; flex-direction:column; position:relative; overflow:hidden; }
                .rul { flex:none; height:18px; background:#262626; }
                .clip { flex:none; height:18px; display:flex; background:#272727; border-top:1px solid #111; border-bottom:1px solid #111; box-sizing:border-box; position:relative; }
                .clip .y { margin-left:118px; flex:1; background-color:#fde27f; background-image:linear-gradient(90deg,#ecd274 1px,transparent 1px); background-size:77.5px 100%; display:flex; align-items:center; gap:6px; padding:0 0 3px 5px; box-sizing:border-box; color:#4a4320; font-size:9.500px; }
                .clip:before { content:""; position:absolute; left:0; width:118px; bottom:1px; height:3px; background:repeating-linear-gradient(90deg,#4b4b4b 0,#4b4b4b 1px,transparent 1px,transparent 4.840px); }
                .strip { flex:none; height:12px; background:#2a2a2a; padding:3px 0 0 496px; box-sizing:border-box; }
                .strip i { display:block; width:80px; height:6px; border-radius:3px; background:#777; }
                .head { position:absolute; left:302px; top:21px; }
                .cursor { position:absolute; left:237px; top:28px; }
                .scr { background:#2a2a2a; padding:161px 0 0 3px; box-sizing:border-box; }
                .scr i { display:block; width:8px; height:84px; background:#555; border-radius:4px; }
            </style>
            <div class="tabs">
                <div class="on">Piano Roll</div><div>Score</div><div>Step Editor</div>
            </div>
            <div class="bar">
                <menu-pills items="Edit,Functions,View"></menu-pills>
                <icon-btn w="27" style="margin-left:7px">${svg(16,10,'<path d="M0 1h7M0 5h7M0 9h7M9 5h7" stroke="#ddd" stroke-width="1.300"/><path d="M9 1h2M9 9h2" stroke="#999"/>')}</icon-btn>
                <icon-btn w="25" style="margin-left:6px">${svg(16,10,'<path d="M6 1h10M0 5h2M6 5h10M6 9h10" stroke="#888"/><circle cx="3" cy="5" r="1" fill="#ddd"/>')}</icon-btn>
                <icon-btn w="25" style="margin-left:9px">${svg(18,12,'<path d="M0 6h4M4 2v8l4-4z" stroke="#ddd" fill="#ddd"/><circle cx="13" cy="6" r="5" fill="#8a8a8a"/>')}</icon-btn>
                <icon-btn w="24" style="margin-left:1px" bg="linear-gradient(#2f6b43,#235636)">${svg(18,12,'<circle cx="7" cy="6" r="5.500" fill="#4fe08a"/><path d="M10 6h8M14 2v8l4-4z" stroke="#4fe08a" fill="#4fe08a"/><path d="M4 6h5" stroke="#1d5a36"/>')}</icon-btn>
                <icon-btn w="25" style="margin-left:8px">${ICON.filter}</icon-btn>
                <icon-btn w="25" style="margin-left:8px" bg="linear-gradient(#6e5c28,#54461c)">${svg(16,12,'<path d="M7 3h5a2.500 2.500 0 0 1 0 5H10M9 9H4a2.500 2.500 0 0 1 0-5h2" fill="none" stroke="#e7c14a" stroke-width="1.800"/>')}</icon-btn>
                <icon-btn w="69" style="margin-left:170px">${ICON.pointer}${TRI}<span style="width:12px"></span>${svg(12,12,'<path d="M1 1l3 1 7 8-2 1-7-8z" fill="#bdbdbd"/>')}${TRI}</icon-btn>
                <div style="margin-left:155px;width:101px;height:19px;flex:none;background:#282828;border-radius:3px;display:flex;align-items:center;color:#ddd;padding-left:21px;box-sizing:border-box;gap:8px"><span>A3</span><span>73 4 2 1</span></div>
                <span class="lbl" style="margin-left:7px;width:32px">Snap:</span>
                <select-box w="108">Smart</select-box>
                <zoom-sliders style="margin-left:6px"></zoom-sliders>
            </div>
            <div class="body">
                <div class="left">
                    <div class="hd">
                        ${ICON.note.replace('width="26" height="13"', 'width="22" height="11"')}
                        <div class="t"><div style="color:#d8d8d8">Pop Piano</div><small>on Track Pop Piano</small></div>
                        <div class="b">${svg(12,11,'<rect x=".5" y=".5" width="11" height="10" fill="#ddd" stroke="#999"/><path d="M3 3.500h6L6 7.500z" fill="#333"/>')}</div>
                    </div>
                    <div class="ins">
                        <quantize-inspector></quantize-inspector>
                        <div class="kb"><piano-keys></piano-keys></div>
                    </div>
                </div>
                <div class="center">
                    <div class="rul"><bar-ruler start="71" count="12" bar="77.5" lead="40"></bar-ruler></div>
                    <div class="clip">
                        <div class="y">
                            ${svg(10,9,'<rect x=".5" y=".5" width="9" height="8" fill="none" stroke="#4a4320"/><path d="M3.500 2.500l3 2-3 2z" fill="#4a4320"/>')}
                            <span>Pop Piano</span>
                        </div>
                    </div>
                    <note-grid></note-grid>
                    <div class="strip"><i></i></div>
                    <div class="head">${svg(13,13,'<path d="M1.500 1.500h10V6L6.500 12 1.500 6z" fill="#ece06a" stroke="#5a5230"/>')}</div>
                    <div class="cursor">${svg(9,14,'<path d="M1 1v10l2.500-2.300L5.300 13l1.800-.8-1.800-4.200H8.500z" fill="#111" stroke="#eee" stroke-width=".7"/>')}</div>
                </div>
                <div class="scr"><i></i></div>
            </div>
        `;
    }
}
customElements.define('piano-panel', PianoPanel);
</script>
</body>
</html>
